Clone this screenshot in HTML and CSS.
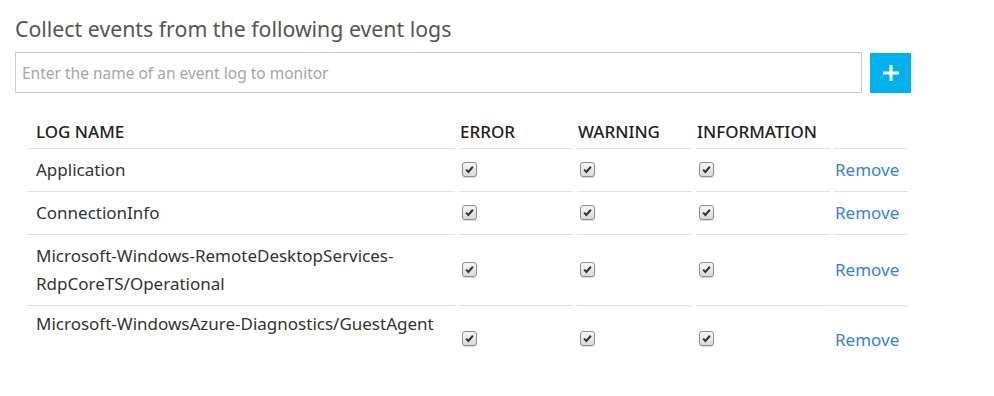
FILE: index.html
```html
<!DOCTYPE html>
<html lang="en">
<head>
  <meta charset="UTF-8" />
  <title>Event logs</title>
  <link rel="stylesheet" href="styles.css">
</head>
<body>

  <div class="panel">
    <h2 class="title">Collect events from the following event logs</h2>

    <div class="add-row">
      <input type="text" class="log-input" placeholder="Enter the name of an event log to monitor">
      <button class="add-btn" title="Add">
        <svg width="16" height="16" viewBox="0 0 16 16"><path d="M8 0v16M0 8h16" stroke="#fff" stroke-width="3"/></svg>
      </button>
    </div>

    <table class="logs">
      <colgroup>
        <col class="c-name"><col class="c-err"><col class="c-warn"><col class="c-info"><col class="c-rem">
      </colgroup>
      <thead>
        <tr>
          <th class="name">LOG NAME</th>
          <th>ERROR</th>
          <th>WARNING</th>
          <th>INFORMATION</th>
          <th></th>
        </tr>
      </thead>
      <tbody>
        <tr>
          <td class="name">Application</td>
          <td><span class="check"><svg viewBox="0 0 15 15"><path d="M3.6 7.6l2.6 2.7 5.2-6"/></svg></span></td>
          <td><span class="check"><svg viewBox="0 0 15 15"><path d="M3.6 7.6l2.6 2.7 5.2-6"/></svg></span></td>
          <td><span class="check"><svg viewBox="0 0 15 15"><path d="M3.6 7.6l2.6 2.7 5.2-6"/></svg></span></td>
          <td class="action"><a href="#" class="remove">Remove</a></td>
        </tr>
        <tr>
          <td class="name">ConnectionInfo</td>
          <td><span class="check"><svg viewBox="0 0 15 15"><path d="M3.6 7.6l2.6 2.7 5.2-6"/></svg></span></td>
          <td><span class="check"><svg viewBox="0 0 15 15"><path d="M3.6 7.6l2.6 2.7 5.2-6"/></svg></span></td>
          <td><span class="check"><svg viewBox="0 0 15 15"><path d="M3.6 7.6l2.6 2.7 5.2-6"/></svg></span></td>
          <td class="action"><a href="#" class="remove">Remove</a></td>
        </tr>
        <tr>
          <td class="name">Microsoft-Windows-RemoteDesktopServices-RdpCoreTS/Operational</td>
          <td><span class="check"><svg viewBox="0 0 15 15"><path d="M3.6 7.6l2.6 2.7 5.2-6"/></svg></span></td>
          <td><span class="check"><svg viewBox="0 0 15 15"><path d="M3.6 7.6l2.6 2.7 5.2-6"/></svg></span></td>
          <td><span class="check"><svg viewBox="0 0 15 15"><path d="M3.6 7.6l2.6 2.7 5.2-6"/></svg></span></td>
          <td class="action"><a href="#" class="remove">Remove</a></td>
        </tr>
        <tr class="tall">
          <td class="name">Microsoft-WindowsAzure-Diagnostics/GuestAgent</td>
          <td><span class="check"><svg viewBox="0 0 15 15"><path d="M3.6 7.6l2.6 2.7 5.2-6"/></svg></span></td>
          <td><span class="check"><svg viewBox="0 0 15 15"><path d="M3.6 7.6l2.6 2.7 5.2-6"/></svg></span></td>
          <td><span class="check"><svg viewBox="0 0 15 15"><path d="M3.6 7.6l2.6 2.7 5.2-6"/></svg></span></td>
          <td class="action"><a href="#" class="remove">Remove</a></td>
        </tr>
      </tbody>
    </table>
  </div>

</body>
</html>
```

FILE: styles.css
```css
* {
  box-sizing: border-box;
}

body {
  margin: 0;
  background: #fff;
  font-family: 'Noto Sans', sans-serif;
  color: #333;
}

.panel {
  padding: 14px 15px;
}

.title {
  margin: 0 0 8px;
  font-size: 21.3px;
  font-weight: 400;
  line-height: 30px;
  color: #555;
}

.add-row {
  display: flex;
  gap: 8px;
  align-items: center;
}

.log-input {
  width: 847px;
  height: 41px;
  padding: 0 6px;
  border: 1px solid #ccc;
  font-family: inherit;
  font-size: 15.5px;
  color: #333;
  outline: none;
}

.log-input::placeholder {
  color: #a6a6a6;
}

.add-btn {
  width: 41px;
  height: 40px;
  border: none;
  padding: 0;
  background: #00b1f0;
  display: flex;
  justify-content: center;
  align-items: center;
  cursor: pointer;
}

.logs {
  margin: 21px 0 0 8px;
  border-collapse: separate;
  border-spacing: 4px 0;
  table-layout: fixed;
  width: 889px;
  font-size: 17px;
}

.c-name { width: 428px; }
.c-err { width: 114px; }
.c-warn { width: 115px; }
.c-info { width: 134px; }
.c-rem { width: 74px; }

.logs th {
  text-align: left;
  font-weight: 500;
  line-height: 28px;
  padding: 4px 1px 2px;
  color: #222;
}

.logs td {
  border-top: 1px solid #e2e2e2;
  padding: 7px 3px;
  line-height: 28px;
  vertical-align: middle;
}

.logs th.name,
.logs td.name {
  padding-left: 9px;
}

.logs td.name {
  vertical-align: top;
  padding-right: 20px;
}

.logs td.action {
  padding-left: 1px;
}

.logs tr.tall td {
  height: 68px;
}

.logs tr.tall td.name {
  padding-top: 4px;
}

.check {
  display: inline-block;
  width: 15px;
  height: 15px;
  border: 1px solid #8e8e8e;
  border-radius: 3px;
  background: linear-gradient(#f6f6f6, #dadada);
  box-shadow: 0 1px 1px rgba(0, 0, 0, 0.15);
  vertical-align: middle;
  margin-bottom: 4px;
}

.check svg {
  display: block;
  width: 13px;
  height: 13px;
  fill: none;
  stroke: #333;
  stroke-width: 2.3;
}

.remove {
  color: #3b80d6;
  text-decoration: none;
}
```
